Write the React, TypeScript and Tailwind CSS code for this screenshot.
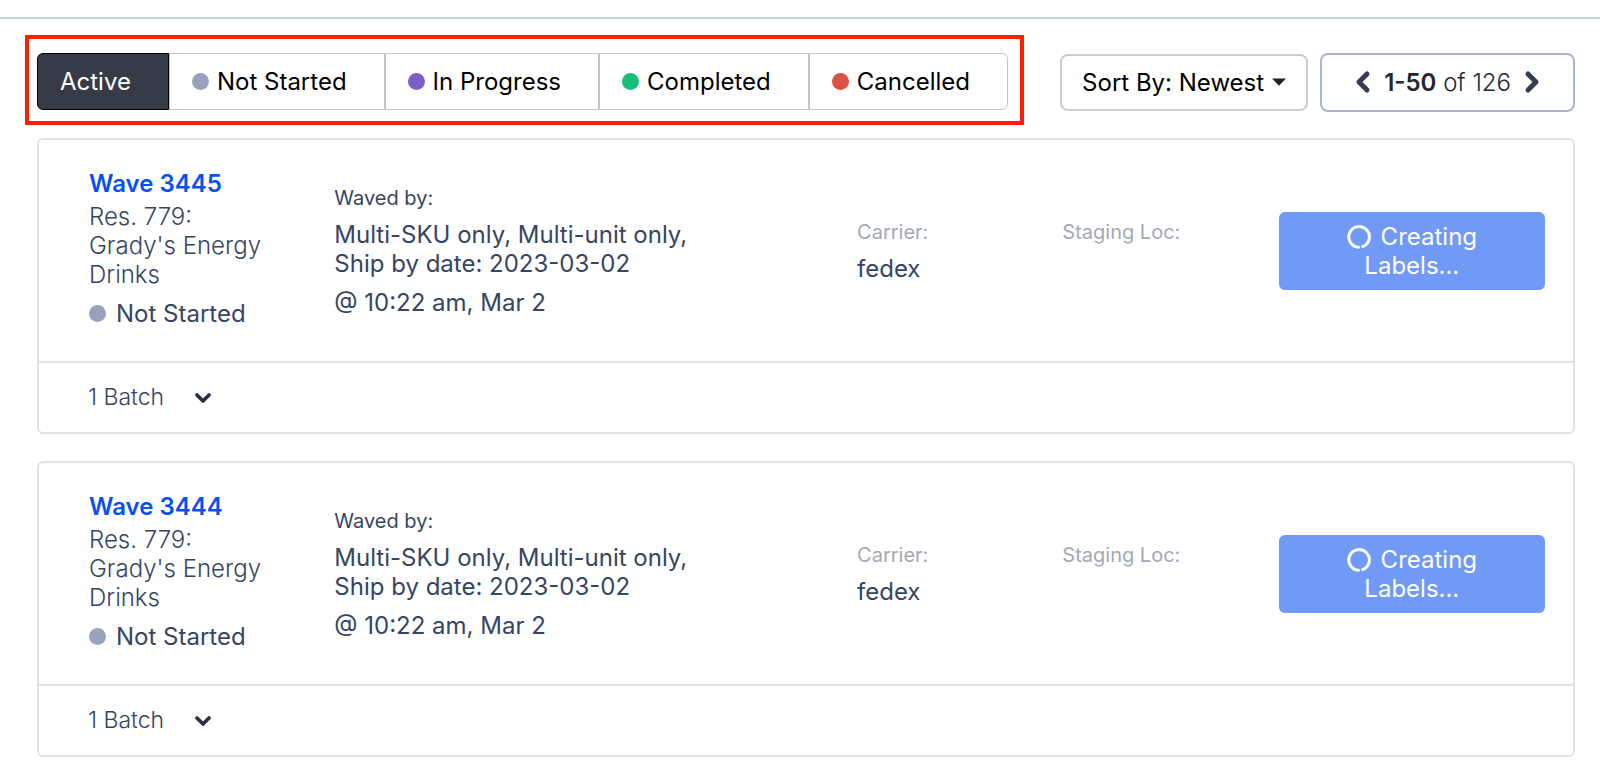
import React from "react";

type Status = { label: string; dot?: string; active?: boolean };

const tabs: Status[] = [
  { label: "Active", active: true },
  { label: "Not Started", dot: "bg-[#98a3bb]" },
  { label: "In Progress", dot: "bg-[#7b5fc7]" },
  { label: "Completed", dot: "bg-[#14c078]" },
  { label: "Cancelled", dot: "bg-[#d95245]" },
];

const waves = [{ id: 3445 }, { id: 3444 }];

function Dot({ color }: { color: string }) {
  return <span className={`inline-block size-[17px] shrink-0 rounded-full ${color}`} />;
}

function Chevron({ d, className }: { d: string; className: string }) {
  return (
    <svg viewBox="0 0 24 24" className={className} fill="none" stroke="currentColor" strokeLinecap="round" strokeLinejoin="round" aria-hidden="true">
      <path d={d} />
    </svg>
  );
}

function Tabs() {
  return (
    <div className="flex border-4 border-[#ff1f00] pb-[11px] pl-2 pr-3 pt-[14px]">
      {tabs.map((t) => (
        <button
          key={t.label}
          type="button"
          className={`flex h-[57px] items-center gap-2 border pl-[22px] pr-[37px] first:rounded-l-md last:rounded-r-md ${
            t.active ? "border-black bg-[#373a47] text-white" : "border-[#c4c4c4] bg-white text-black"
          }`}
        >
          {t.dot && <Dot color={t.dot} />}
          {t.label}
        </button>
      ))}
    </div>
  );
}

function WaveCard({ id }: { id: number }) {
  return (
    <section className="rounded-md border-2 border-[#e2e2e2] text-[#364561]">
      <div className="grid grid-cols-[245fr_522fr_205fr_216fr_266fr] border-b-2 border-[#e2e2e2] pb-[33px] pl-[50px] pr-7 pt-[29px]">
        <div className="pr-14 font-light">
          <a href="#" className="font-semibold text-[#0a50f0]">
            Wave {id}
          </a>
          <p className="mt-1">Res. 779: Grady's Energy Drinks</p>
          <p className="mt-[10px] flex items-center gap-[10px] font-normal">
            <Dot color="bg-[#98a3bb]" />
            Not Started
          </p>
        </div>
        <div className="pt-4">
          <p className="text-xl leading-[26px]">Waved by:</p>
          <p className="mt-[9px] max-w-[380px]">Multi-SKU only, Multi-unit only, Ship by date: 2023-03-02</p>
          <p className="mt-[10px]">@ 10:22 am, Mar 2</p>
        </div>
        <div className="pt-[50px]">
          <p className="text-xl leading-[26px] text-[#a4a9b5]">Carrier:</p>
          <p className="mt-[9px]">fedex</p>
        </div>
        <div className="pt-[50px]">
          <p className="text-xl leading-[26px] text-[#a4a9b5]">Staging Loc:</p>
        </div>
        <div className="pt-[43px]">
          <button type="button" className="w-full rounded-md bg-[#7199f6] px-16 py-[10px] text-white">
            <svg viewBox="0 0 24 24" className="mr-[10px] inline-block size-6 align-[-4px]" fill="none" stroke="currentColor" strokeWidth="3" strokeLinecap="round" aria-hidden="true">
              <path d="M11.6 22.2A10.3 10.3 0 1 1 15.6 21.6" />
            </svg>
            Creating Labels...
          </button>
        </div>
      </div>
      <button type="button" className="flex h-[69px] w-full items-center gap-[30px] pl-[49px] text-[23px] font-light">
        <span>1 Batch</span>
        <Chevron d="M4 8l8 8 8-8" className="size-[18px] stroke-[5] text-[#2c3242]" />
      </button>
    </section>
  );
}

export default function App() {
  return (
    <main className="bg-white pt-[17px] font-['Inter',sans-serif] text-2xl leading-[29px]">
      <div className="border-t-2 border-[#c9d0de] px-[25px] pt-4">
        <div className="flex items-center justify-between">
          <Tabs />
          <div className="flex items-center gap-3 pt-1">
            <button type="button" className="flex h-[57px] items-center gap-2 rounded-lg border-2 border-[#cdcdcd] px-5 text-black">
              Sort By: Newest
              <svg viewBox="0 0 14 8" className="h-2 w-[14px]" fill="#1f2430" aria-hidden="true">
                <path d="M0 0.5h14L7 7.8z" />
              </svg>
            </button>
            <nav aria-label="Pagination" className="flex h-[59px] items-center gap-[10px] rounded-lg border-2 border-[#a9b5ca] px-7 font-light text-[#22262f]">
              <button type="button" aria-label="Previous page">
                <Chevron d="M17 4l-8 8 8 8" className="size-6 stroke-[5] text-[#333d57]" />
              </button>
              <span>
                <b className="font-semibold">1-50</b> of 126
              </span>
              <button type="button" aria-label="Next page">
                <Chevron d="M7 4l8 8-8 8" className="size-6 stroke-[5] text-[#333d57]" />
              </button>
            </nav>
          </div>
        </div>
        <div className="mt-[13px] flex flex-col gap-[27px] pl-3">
          {waves.map((w) => (
            <WaveCard key={w.id} id={w.id} />
          ))}
        </div>
      </div>
    </main>
  );
}
